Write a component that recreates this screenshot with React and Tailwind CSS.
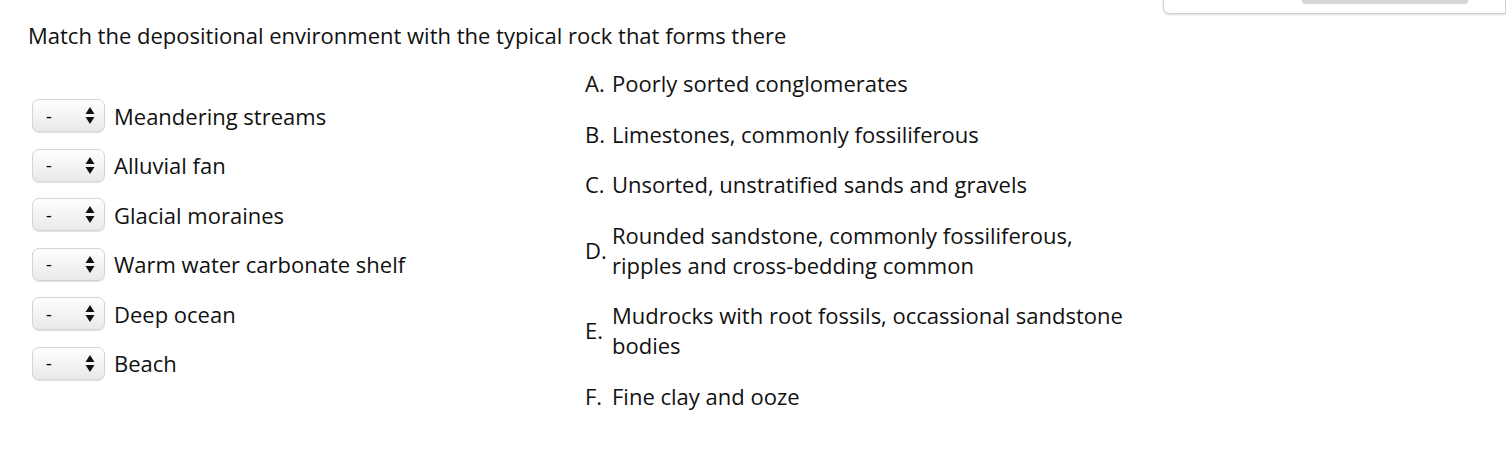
import React from "react";

const prompts = [
  "Meandering streams",
  "Alluvial fan",
  "Glacial moraines",
  "Warm water carbonate shelf",
  "Deep ocean",
  "Beach",
];

const answers = [
  { key: "A.", text: "Poorly sorted conglomerates" },
  { key: "B.", text: "Limestones, commonly fossiliferous" },
  { key: "C.", text: "Unsorted, unstratified sands and gravels" },
  { key: "D.", text: ["Rounded sandstone, commonly fossiliferous,", "ripples and cross-bedding common"] },
  { key: "E.", text: ["Mudrocks with root fossils, occassional sandstone", "bodies"] },
  { key: "F.", text: "Fine clay and ooze" },
];

// fake native select: dash on the left, up/down arrows on the right
const MatchSelect = () => (
  <div className="flex h-[33px] w-[73px] items-center justify-between rounded-[7px] border border-[#d4d4d4] bg-gradient-to-b from-white to-[#e9e9e9] pl-[13px] pr-[9px] shadow-[0_1px_1px_rgba(0,0,0,0.12)]">
    <span className="text-[18px] leading-none text-black">-</span>
    <svg width="10" height="19" viewBox="0 0 10 19">
      <path d="M5 1 L9.5 8 L0.5 8 Z" fill="#111" />
      <path d="M5 18 L9.5 11 L0.5 11 Z" fill="#111" />
    </svg>
  </div>
);

export default function App() {
  return (
    <div className="relative h-[462px] w-[1506px] overflow-hidden bg-white font-['Open_Sans',sans-serif] text-[22px] text-[#111]">
      {/* top-right toolbar stub */}
      <div className="absolute right-0 top-[-10px] h-[24px] w-[343px] rounded-bl-[6px] border border-[#cfcfcf] bg-white shadow-[0_1px_2px_rgba(0,0,0,0.15)]">
        <div className="absolute left-[138px] top-[8px] h-[5px] w-[166px] rounded-b-[3px] bg-[#d6d6d6]" />
      </div>

      <div className="px-[28px] pt-[20px]">
        <p className="leading-[30px]">Match the depositional environment with the typical rock that forms there</p>

        <div className="mt-[18px] flex items-center">
          <div className="flex w-[557px] flex-col gap-[16.5px] pl-[4px]">
            {prompts.map((label) => (
              <div key={label} className="flex items-center gap-[9px]">
                <MatchSelect />
                <span className="leading-[30px]">{label}</span>
              </div>
            ))}
          </div>

          <div className="flex flex-col gap-[20.5px]">
            {answers.map((a) => (
              <div key={a.key} className="flex items-center">
                <span className="w-[27px] leading-[30px]">{a.key}</span>
                <div className="leading-[30px]">
                  {Array.isArray(a.text) ? a.text.map((line) => <div key={line}>{line}</div>) : a.text}
                </div>
              </div>
            ))}
          </div>
        </div>
      </div>
    </div>
  );
}
